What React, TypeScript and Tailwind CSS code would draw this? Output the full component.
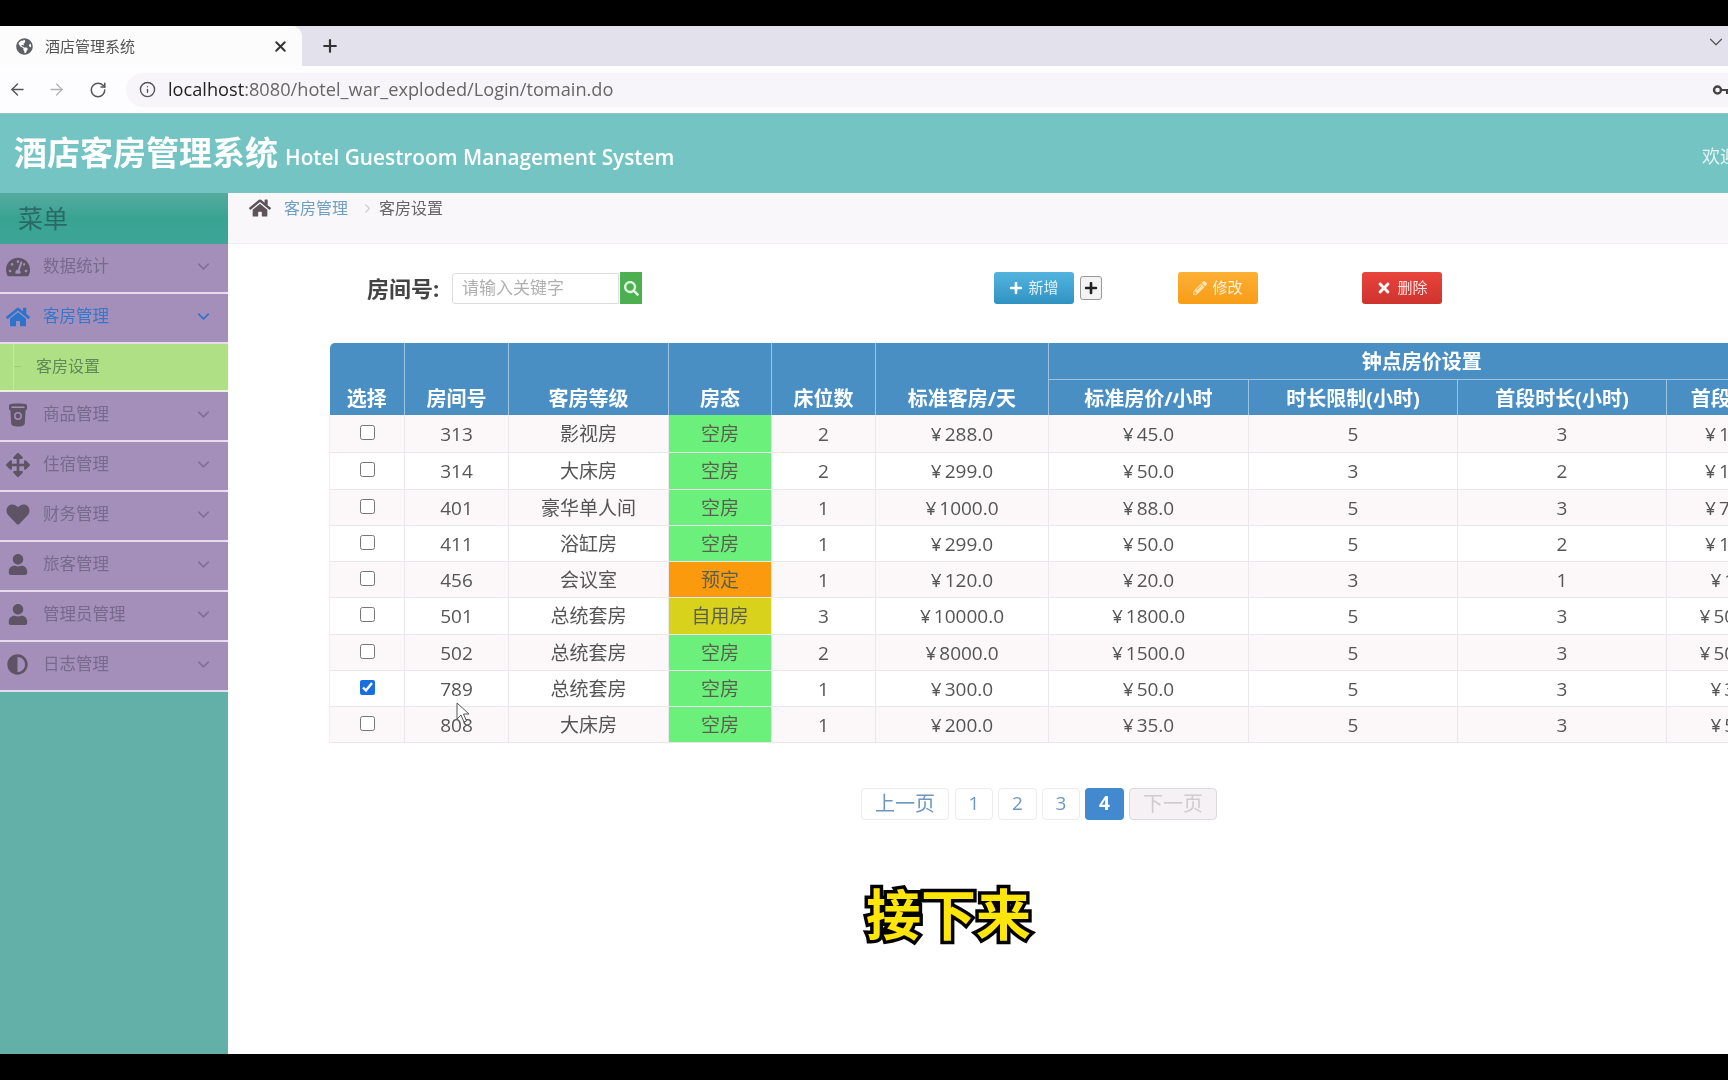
import { ArrowLeft, ArrowRight, ChevronDown, ChevronRight, Info, Plus, RotateCw, X } from "lucide-react";
import {
  FaAdjust,
  FaArrowsAlt,
  FaGlobeAmericas,
  FaHeart,
  FaHome,
  FaPencilAlt,
  FaPlus,
  FaSearch,
  FaTachometerAlt,
  FaTimes,
  FaUser,
} from "react-icons/fa";

// 商品管理 icon, no matching glyph in the packages
function CupIcon({ className }: { className?: string }) {
  return (
    <svg viewBox="0 0 20 24" className={className} fill="currentColor">
      <path d="M1 2.5C1 1.2 3 .5 10 .5s9 .7 9 2v3c0 1-.6 1.6-1.4 1.8l-.8 13c-.1 1.8-1.6 3.2-6.8 3.2s-6.7-1.4-6.8-3.2l-.8-13C1.600 7.100 1 6.500 1 5.500z" />
      <circle cx="10" cy="13" r="3.200" fill="none" stroke="#a48fba" strokeWidth="1.500" />
      <rect x="3.500" y="3.500" width="13" height="1.500" fill="#a48fba" />
    </svg>
  );
}

const menu = [
  { label: "数据统计", icon: <FaTachometerAlt className="w-[24px] h-[22px]" /> },
  { label: "客房管理", icon: <FaHome className="w-[24px] h-[22px]" />, active: true },
  { label: "商品管理", icon: <CupIcon className="w-[20px] h-[24px]" /> },
  { label: "住宿管理", icon: <FaArrowsAlt className="w-[24px] h-[24px]" /> },
  { label: "财务管理", icon: <FaHeart className="w-[24px] h-[23px]" /> },
  { label: "旅客管理", icon: <FaUser className="w-[20px] h-[21px]" /> },
  { label: "管理员管理", icon: <FaUser className="w-[20px] h-[21px]" /> },
  { label: "日志管理", icon: <FaAdjust className="w-[21px] h-[21px]" /> },
];

const rooms = [
  { no: "313", grade: "影视房", state: "空房", beds: 2, day: "288.0", hour: "45.0", limit: 5, first: 3, price: "15.0", tall: true },
  { no: "314", grade: "大床房", state: "空房", beds: 2, day: "299.0", hour: "50.0", limit: 3, first: 2, price: "15.0", tall: true },
  { no: "401", grade: "豪华单人间", state: "空房", beds: 1, day: "1000.0", hour: "88.0", limit: 5, first: 3, price: "70.0" },
  { no: "411", grade: "浴缸房", state: "空房", beds: 1, day: "299.0", hour: "50.0", limit: 5, first: 2, price: "15.0" },
  { no: "456", grade: "会议室", state: "预定", beds: 1, day: "120.0", hour: "20.0", limit: 3, first: 1, price: "1.0" },
  { no: "501", grade: "总统套房", state: "自用房", beds: 3, day: "10000.0", hour: "1800.0", limit: 5, first: 3, price: "500.0", tall: true },
  { no: "502", grade: "总统套房", state: "空房", beds: 2, day: "8000.0", hour: "1500.0", limit: 5, first: 3, price: "500.0" },
  { no: "789", grade: "总统套房", state: "空房", beds: 1, day: "300.0", hour: "50.0", limit: 5, first: 3, price: "3.0", checked: true },
  { no: "808", grade: "大床房", state: "空房", beds: 1, day: "200.0", hour: "35.0", limit: 5, first: 3, price: "5.0" },
];

const stateColor: Record<string, string> = {
  空房: "bg-[#6cf07c]",
  预定: "bg-[#fb9a0c]",
  自用房: "bg-[#d9d21c]",
};

function Money({ value }: { value: string }) {
  return (
    <span>
      <span className="mr-[3px]">¥</span>
      {value}
    </span>
  );
}

function BrowserChrome() {
  return (
    <>
      <div className="flex h-[40px] shrink-0 bg-[#e3e2ec]">
        <div className="flex w-[302px] items-center rounded-tr-[10px] bg-[#fdfcfd] pl-[16px] pr-[13px]">
          <FaGlobeAmericas className="h-[17px] w-[17px] text-[#5b5f66]" />
          <span className="ml-[12px] text-[15px] text-[#555]">酒店管理系统</span>
          <X className="ml-auto h-[17px] w-[17px] text-[#333]" strokeWidth={2.8} />
        </div>
        <div className="ml-[18px] flex items-center">
          <Plus className="h-[20px] w-[20px] text-[#333]" strokeWidth={2.6} />
        </div>
        <ChevronDown className="ml-auto mr-[1px] mt-[5px] h-[22px] w-[22px] text-[#555]" strokeWidth={1.3} />
      </div>
      <div className="flex h-[47px] shrink-0 items-center bg-[#fdfcfe] pl-[8px]">
        <ArrowLeft className="h-[19px] w-[19px] text-[#555]" strokeWidth={1.8} />
        <ArrowRight className="ml-[20px] h-[19px] w-[19px] text-[#b4b4b8]" strokeWidth={1.6} />
        <RotateCw className="ml-[23px] h-[18px] w-[18px] text-[#555]" strokeWidth={2} />
        <div className="ml-[19px] flex h-[34px] flex-1 items-center overflow-hidden rounded-l-[17px] bg-[#f8f5fa] pl-[13px]">
          <Info className="h-[17px] w-[17px] text-[#555]" strokeWidth={2} />
          <span className="ml-[12px] text-[18.200px] text-[#666]">
            <span className="text-[#222]">localhost</span>:8080/hotel_war_exploded/Login/tomain.do
          </span>
          <svg viewBox="0 0 22 14" className="ml-auto h-[14px] w-[22px] shrink-0 translate-x-[6px] text-[#444]" fill="none" stroke="currentColor">
            <circle cx="5.500" cy="7" r="3.500" strokeWidth="2.400" />
            <path d="M9 7h13M15 7v4M19 7v3" strokeWidth="2.200" />
          </svg>
        </div>
      </div>
    </>
  );
}

function Sidebar() {
  return (
    <aside className="flex w-[228px] shrink-0 flex-col bg-[#62b0a8]">
      <div className="flex h-[51px] shrink-0 items-center bg-gradient-to-b from-[#55aa9e] via-[#38a392] to-[#3fa596] pl-[18px] text-[25px] text-[#2b6a64]">
        菜单
      </div>
      {menu.map((m) => (
        <div key={m.label}>
          <div className="flex h-[50px] items-center border-b-2 border-[#e6dcee] bg-[#a48fba] pb-[3px]">
            <div className={"flex w-[35px] justify-center " + (m.active ? "text-[#2a74cc]" : "text-[#5e5466]")}>{m.icon}</div>
            <span className={"ml-[8px] text-[16.500px] " + (m.active ? "text-[#3777cb]" : "text-[#776a8c]")}>{m.label}</span>
            <ChevronDown className={"ml-auto mr-[15px] h-[19px] w-[19px] " + (m.active ? "text-[#2f72c8]" : "text-[#7f7098]")} strokeWidth={2} />
          </div>
          {m.active && (
            <div className="relative flex h-[48px] items-center border-b-2 border-[#e8f3de] bg-[#b0e085] pb-[2px] pl-[36px] text-[16px] text-[#5f8a55]">
              <span className="absolute bottom-0 left-[13px] top-0 w-px bg-[#c6ea9f]" />
              <span className="absolute left-[14px] top-[22px] h-px w-[7px] bg-[#9cc97a]" />
              客房设置
            </div>
          )}
        </div>
      ))}
    </aside>
  );
}

function Toolbar() {
  const btn = "flex h-[32px] w-[80px] items-center justify-center gap-[5px] rounded-[3px] pb-[1px] text-[15px] text-white/85";
  return (
    <div className="mt-[28px] flex h-[32px] items-center pl-[139px]">
      <span className="w-[85px] text-[22px] font-bold text-[#444]">房间号:</span>
      <div className="flex h-[31px] w-[167px] items-center rounded-l-[3px] border border-[#ddd] pl-[9px] text-[17px] text-[#b0b0b0]">
        请输入关键字
      </div>
      <div className="ml-[1px] flex h-[32px] w-[22px] items-center justify-center bg-[#4caf50]">
        <FaSearch className="h-[15px] w-[15px] text-[#dff3e0]" />
      </div>
      <div className={btn + " ml-[352px] bg-gradient-to-b from-[#52b4de] to-[#2f93c2]"}>
        <FaPlus className="h-[14px] w-[14px] text-white" />
        新增
      </div>
      <div className="ml-[6px] flex h-[24px] w-[22px] items-center justify-center rounded-[3px] border border-[#999] bg-[#f4f4f4]">
        <FaPlus className="h-[14px] w-[14px] text-[#222]" />
      </div>
      <div className={btn + " ml-[76px] bg-gradient-to-b from-[#fbb034] to-[#f89c14]"}>
        <FaPencilAlt className="h-[14px] w-[14px] text-[#fde2b0]" />
        修改
      </div>
      <div className={btn + " ml-[104px] bg-gradient-to-b from-[#e8443c] to-[#cf332e]"}>
        <FaTimes className="h-[16px] w-[16px] text-white" />
        删除
      </div>
    </div>
  );
}

function RoomTable() {
  const th = "border-l border-[#9cc4e2] bg-[#4a8fc4] px-0 text-[20px] font-bold text-white";
  const td = "border-l border-[#ece7ec] px-0 pt-[2px] text-center";
  return (
    <div className="ml-[101px] mt-[39px] w-[1500px] text-[19px] text-[#555]">
      <table className="w-[1464px] table-fixed border-collapse">
        <colgroup>
          <col className="w-[75px]" />
          <col className="w-[104px]" />
          <col className="w-[160px]" />
          <col className="w-[103px]" />
          <col className="w-[104px]" />
          <col className="w-[173px]" />
          <col className="w-[200px]" />
          <col className="w-[209px]" />
          <col className="w-[209px]" />
          <col className="w-[128px]" />
        </colgroup>
        <thead>
          <tr className="h-[36px]">
            <th rowSpan={2} className={th + " rounded-tl-[5px] border-l-0 pb-[1px] align-bottom"}>选择</th>
            <th rowSpan={2} className={th + " pb-[1px] align-bottom"}>房间号</th>
            <th rowSpan={2} className={th + " pb-[1px] align-bottom"}>客房等级</th>
            <th rowSpan={2} className={th + " pb-[1px] align-bottom"}>房态</th>
            <th rowSpan={2} className={th + " pb-[1px] align-bottom"}>床位数</th>
            <th rowSpan={2} className={th + " pb-[1px] align-bottom"}>标准客房/天</th>
            <th colSpan={4} className={th + " border-b pt-[2px]"}>钟点房价设置</th>
          </tr>
          <tr className="h-[36px]">
            <th className={th + " pt-[4px]"}>标准房价/小时</th>
            <th className={th + " pt-[4px]"}>时长限制(小时)</th>
            <th className={th + " pt-[4px]"}>首段时长(小时)</th>
            <th className={th + " pt-[4px]"}>首段房价</th>
          </tr>
        </thead>
        <tbody>
          {rooms.map((r, i) => (
            <tr
              key={r.no}
              className={(r.tall ? "h-[37px] " : "h-[36px] ") + "border-b border-[#ece7ec] " + (i % 2 === 0 ? "bg-[#fcf7f9]" : "bg-white")}
            >
              <td className={td + " border-l-[#f1edf1]"}>
                <input type="checkbox" defaultChecked={r.checked} className="h-[15px] w-[15px] align-[1px] accent-[#1a6fe0]" />
              </td>
              <td className={td}>{r.no}</td>
              <td className={td}>{r.grade}</td>
              <td className={td + " text-[#5a5f4e] " + stateColor[r.state]}>{r.state}</td>
              <td className={td}>{r.beds}</td>
              <td className={td}><Money value={r.day} /></td>
              <td className={td}><Money value={r.hour} /></td>
              <td className={td}>{r.limit}</td>
              <td className={td}>{r.first}</td>
              <td className={td}><Money value={r.price} /></td>
            </tr>
          ))}
        </tbody>
      </table>
    </div>
  );
}

function Pagination() {
  const item = "flex h-[32px] items-center justify-center rounded-[4px] border border-[#eeeaee] text-[#6f97bd]";
  return (
    <div className="mt-[45px] flex pl-[633px] text-[19px]">
      <div className={item + " w-[88px] text-[20px]"}>上一页</div>
      <div className={item + " ml-[6px] w-[38px]"}>1</div>
      <div className={item + " ml-[5px] w-[39px]"}>2</div>
      <div className={item + " ml-[5px] w-[38px]"}>3</div>
      <div className="ml-[5px] flex h-[32px] w-[39px] items-center justify-center rounded-[4px] bg-[#4289d0] font-bold text-white">4</div>
      <div className="ml-[5px] flex h-[32px] w-[88px] items-center justify-center rounded-[4px] border border-[#dcd8dc] bg-[#f5f1f5] text-[20px] text-[#cfcbcf]">下一页</div>
    </div>
  );
}

export default function App() {
  return (
    <div className="relative flex h-[1080px] w-[1728px] flex-col overflow-hidden bg-black font-['Open_Sans','Noto_Sans_CJK_SC',sans-serif] blur-[0.5px]">
      <div className="h-[26px] shrink-0" />
      <BrowserChrome />

      <header className="flex h-[80px] shrink-0 items-center overflow-hidden border-t border-[#8fc4c8] bg-[#75c4c4] pb-[2px] pl-[14px] text-white">
        <div className="flex w-[1688px] shrink-0 items-baseline">
          <span className="text-[33px] font-bold leading-none">酒店客房管理系统</span>
          <span className="ml-[7px] text-[20.800px] font-semibold leading-none">Hotel Guestroom Management System</span>
        </div>
        <span className="mt-[8px] shrink-0 text-[18px] text-[#e6f5f5]">欢迎您</span>
      </header>

      <div className="flex min-h-0 flex-1">
        <Sidebar />
        <main className="min-w-0 flex-1 bg-white">
          <div className="flex h-[51px] items-start border-b border-[#f0ecf0] bg-[#faf7fa] pl-[21px] pt-[3px] text-[16px]">
            <FaHome className="mt-[2px] h-[20px] w-[22px] text-[#5d5358]" />
            <span className="ml-[13px] text-[#6f9fc0]">客房管理</span>
            <ChevronRight className="ml-[12px] mt-[5px] h-[15px] w-[15px] text-[#cfcfcf]" strokeWidth={1.8} />
            <span className="ml-[4px] text-[#666]">客房设置</span>
          </div>
          <Toolbar />
          <RoomTable />
          <Pagination />
        </main>
      </div>

      <div className="h-[26px] shrink-0" />

      {/* subtitle burned into the video */}
      <div className="absolute left-[866px] top-[881px] text-[55px] font-bold leading-[66px] text-[#ffe60a] [-webkit-text-stroke:7px_#000] [paint-order:stroke_fill]">
        接下来
      </div>

      {/* mouse pointer */}
      <svg viewBox="0 0 14 22" className="absolute left-[456px] top-[702px] h-[22px] w-[14px]">
        <path d="M1 1v16l4-4 3 7 2.500-1-3-7h5.500z" fill="#fff" stroke="#555" strokeWidth="1" />
      </svg>
    </div>
  );
}
